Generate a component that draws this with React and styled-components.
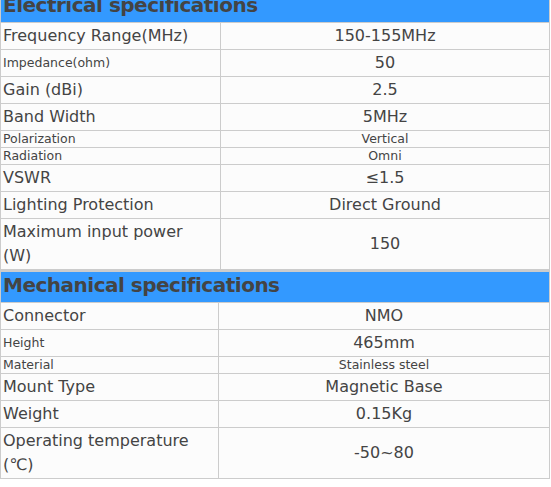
import React from 'react';
import styled, { createGlobalStyle } from 'styled-components';

const electrical = [
  { label: 'Frequency Range(MHz)', value: '150-155MHz' },
  { label: 'Impedance(ohm)', value: '50', smallLabel: true },
  { label: 'Gain (dBi)', value: '2.5' },
  { label: 'Band Width', value: '5MHz' },
  { label: 'Polarization', value: 'Vertical', smallLabel: true, smallValue: true },
  { label: 'Radiation', value: 'Omni', smallLabel: true, smallValue: true },
  { label: 'VSWR', value: '≤1.5' },
  { label: 'Lighting Protection', value: 'Direct Ground' },
  { label: 'Maximum input power (W)', value: '150' },
];

const mechanical = [
  { label: 'Connector', value: 'NMO' },
  { label: 'Height', value: '465mm', smallLabel: true },
  { label: 'Material', value: 'Stainless steel', smallLabel: true, smallValue: true },
  { label: 'Mount Type', value: 'Magnetic Base' },
  { label: 'Weight', value: '0.15Kg' },
  { label: 'Operating temperature (℃)', value: '-50~80' },
];

const SpecTable = ({ title, rows, split, joined }) => {
  return (
    <StyledTable $joined={joined}>
      <colgroup>
        <col style={{ width: split }} />
        <col />
      </colgroup>
      <thead>
        <tr>
          <StyledHeading colSpan={2}>{title}</StyledHeading>
        </tr>
      </thead>
      <tbody>
        {rows.map((row, index) => (
          <tr key={index}>
            <StyledLabel $small={row.smallLabel}>{row.label}</StyledLabel>
            <StyledValue $small={row.smallValue}>{row.value}</StyledValue>
          </tr>
        ))}
      </tbody>
    </StyledTable>
  );
}

const App = () => {
  return (
    <>
      <GlobalStyle />
      <StyledPage>
        <SpecTable title="Electrical specifications" rows={electrical} split="220px" />
        <SpecTable title="Mechanical specifications" rows={mechanical} split="218px" joined />
      </StyledPage>
    </>
  );
}

const GlobalStyle = createGlobalStyle`
  html, body {
    margin: 0;
    background: #fff;
  }
  body {
    font-family: "DejaVu Sans", Verdana, sans-serif;
    overflow: hidden;
  }
`
const StyledPage = styled.div`
  width: 550px;
  margin-top: -9px;
`
const StyledTable = styled.table`
  width: 550px;
  border-collapse: collapse;
  table-layout: fixed;
  border: 1px solid #cccccc;
  border-top-width: ${props => props.$joined ? '2px' : '1px'};
`
const StyledHeading = styled.th`
  height: 27px;
  padding: 0 2px 3px;
  background-color: #3399ff;
  border: 1px solid #cccccc;
  color: #444;
  font-size: 20px;
  font-weight: bold;
  letter-spacing: -0.5px;
  line-height: 27px;
  text-align: left;
  white-space: nowrap;
`
const StyledCell = styled.td`
  padding: 1px 2px;
  border: 1px solid #cccccc;
  background-color: #fcfcfc;
  color: #444;
  font-size: ${props => props.$small ? '12.5px' : '16px'};
  line-height: ${props => props.$small ? '14px' : '24px'};
  vertical-align: middle;
`
const StyledLabel = styled(StyledCell)`
  padding-right: 8px;
  text-align: left;
`
const StyledValue = styled(StyledCell)`
  text-align: center;
`

export default App;
